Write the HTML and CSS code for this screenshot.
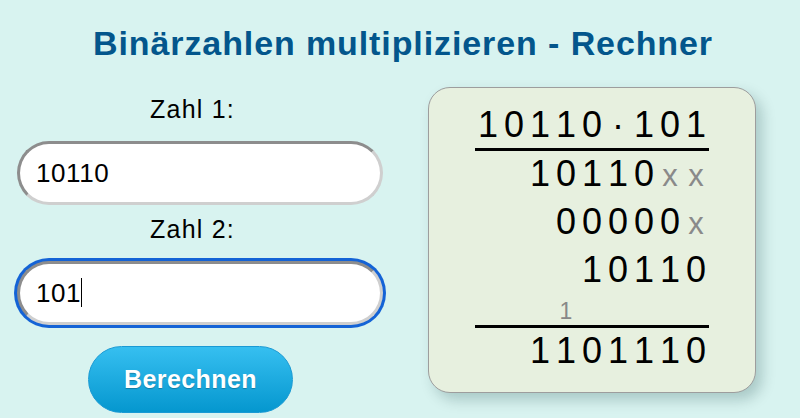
FILE: index.html
```html
<!DOCTYPE html>
<html lang="de">
<head>
<meta charset="utf-8">
<title>Binärzahlen multiplizieren - Rechner</title>
<link rel="stylesheet" href="styles.css">
</head>
<body>
<h1 class="title">Binärzahlen multiplizieren - Rechner</h1>
<main class="layout">
  <section class="form">
    <label class="label" for="z1">Zahl 1:</label>
    <input class="field" id="z1" type="text" value="10110">
    <label class="label label-second" for="z2">Zahl 2:</label>
    <div class="field-wrap">
      <input class="field is-focused" id="z2" type="text" value="101">
      <span class="caret"></span>
    </div>
    <button class="btn" type="button">Berechnen</button>
  </section>
  <section class="result">
    <table class="calc">
      <tr class="row head">
        <td>1</td><td>0</td><td>1</td><td>1</td><td>0</td><td>·</td><td>1</td><td>0</td><td>1</td>
      </tr>
      <tr class="row">
        <td></td><td></td><td>1</td><td>0</td><td>1</td><td>1</td><td>0</td><td class="pad">x</td><td class="pad">x</td>
      </tr>
      <tr class="row">
        <td></td><td></td><td></td><td>0</td><td>0</td><td>0</td><td>0</td><td>0</td><td class="pad">x</td>
      </tr>
      <tr class="row">
        <td></td><td></td><td></td><td></td><td>1</td><td>0</td><td>1</td><td>1</td><td>0</td>
      </tr>
      <tr class="carry">
        <td></td><td></td><td></td><td>1</td><td></td><td></td><td></td><td></td><td></td>
      </tr>
      <tr class="row">
        <td></td><td></td><td>1</td><td>1</td><td>0</td><td>1</td><td>1</td><td>1</td><td>0</td>
      </tr>
    </table>
  </section>
</main>
</body>
</html>
```
FILE: styles.css
```css
html, body {
  margin: 0;
  padding: 0;
}
body {
  background: #d8f3f0;
  font-family: "Liberation Sans", Arial, sans-serif;
  color: #000;
  width: 800px;
  height: 418px;
  overflow: hidden;
}
.title {
  margin: 24px 0 0;
  height: 38px;
  line-height: 38px;
  font-size: 34px;
  font-weight: bold;
  letter-spacing: 0.9px;
  text-align: center;
  color: #03568c;
  padding-left: 6px;
}
.layout {
  display: flex;
  margin-top: 25px;
  align-items: flex-start;
}
.form {
  display: flex;
  flex-direction: column;
  width: 366px;
  margin-left: 17px;
}
.label {
  display: block;
  height: 30px;
  line-height: 30px;
  font-size: 25px;
  letter-spacing: 1.2px;
  text-align: center;
  padding-right: 15px;
  margin-top: 7px;
  margin-bottom: 17px;
}
.label-second {
  margin-top: 9px;
}
.field-wrap {
  position: relative;
  height: 64px;
}
.field {
  box-sizing: border-box;
  width: 366px;
  height: 64px;
  margin: 0;
  padding: 0 16px;
  border: 3px solid;
  border-color: #8d8d8d #cfcfcf #cfcfcf #8d8d8d;
  border-radius: 32px;
  background: #fff;
  font-family: "Liberation Sans", Arial, sans-serif;
  font-size: 26px;
  letter-spacing: 0.6px;
  color: #000;
  outline: none;
}
.field.is-focused {
  box-shadow: 0 0 0 3px #1463d6;
}
.caret {
  position: absolute;
  left: 64px;
  top: 17px;
  width: 1px;
  height: 29px;
  background: #000;
}
.btn {
  box-sizing: border-box;
  width: 205px;
  height: 67px;
  margin: 21px 0 0 71px;
  border: 1px solid #1a9ad4;
  border-radius: 34px;
  background: linear-gradient(to bottom, #36bff0, #0597cf);
  color: #fff;
  font-family: "Liberation Sans", Arial, sans-serif;
  font-size: 25px;
  font-weight: bold;
  letter-spacing: 0.4px;
  text-shadow: 0 1px 1px rgba(0, 0, 0, 0.25);
  padding: 0;
}
.result {
  box-sizing: border-box;
  width: 328px;
  height: 306px;
  margin-left: 45px;
  padding-top: 14px;
  border: 1px solid #9d9d9d;
  border-radius: 22px;
  background: #e7f0df;
  box-shadow: 6px 7px 14px rgba(0, 50, 50, 0.22);
}
.calc {
  border-collapse: collapse;
  margin: 0 auto;
  font-size: 36px;
}
.calc td {
  width: 26px;
  padding: 0;
  text-align: center;
  vertical-align: baseline;
}
.row td {
  height: 46px;
  line-height: 46px;
}
.head td {
  border-bottom: 3px solid #000;
}
.pad {
  font-size: 31px;
  color: #8a8a8a;
}
.carry td {
  height: 32px;
  line-height: 28px;
  font-size: 23px;
  color: #888;
  border-bottom: 3px solid #000;
  vertical-align: bottom;
}
```
